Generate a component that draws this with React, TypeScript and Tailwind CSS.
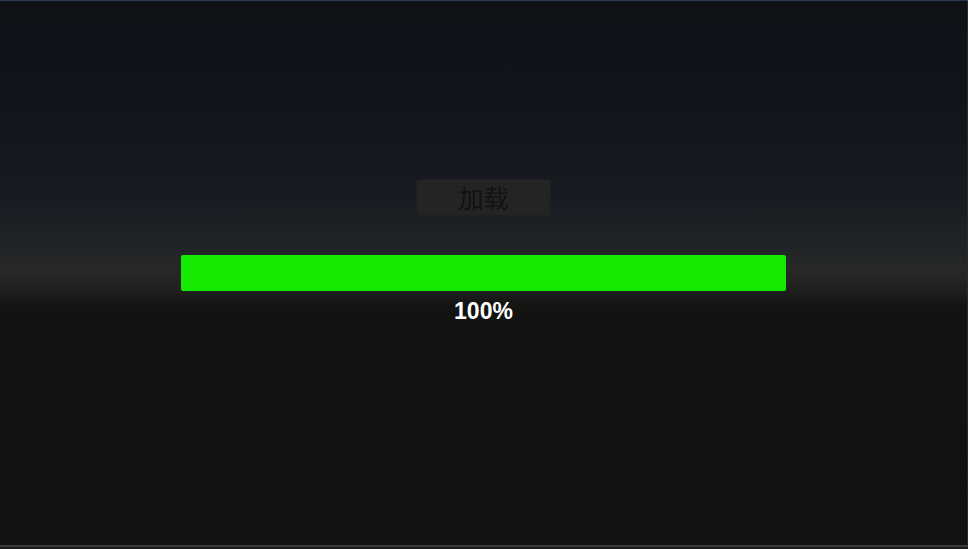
export default function App() {
  return (
    <div className="w-[968px] h-[549px] flex flex-col overflow-hidden border-t border-[#2c3a56] bg-[#111110] font-['Liberation_Sans',sans-serif]">
      <div className="flex-1 flex flex-col items-center border-r border-[#2a2a2a] bg-[linear-gradient(to_bottom,#0e1116_0px,#11151b_100px,#171b21_190px,#1f2327_240px,#272827_268px,#1f1f1f_290px,#131312_305px,#111110_549px)]">
        <button className="mt-[178px] w-[135px] h-[37px] flex items-center justify-center bg-[#242424] border border-[#1f1f1f] rounded-[2px] text-[25px] leading-none font-normal text-[#121212] font-['Noto_Sans_CJK_SC',sans-serif]">
          加载
        </button>
        <div className="mt-[39px] w-[605px] h-[36px] rounded-[2px] bg-[#15eb00]" />
        <p className="mt-[9px] text-[23px] leading-none font-bold text-white">100%</p>
      </div>
      <div className="h-[2px] bg-[#3a3a3a]" />
      <div className="h-[2px] bg-[#1c1c1c]" />
    </div>
  );
}
